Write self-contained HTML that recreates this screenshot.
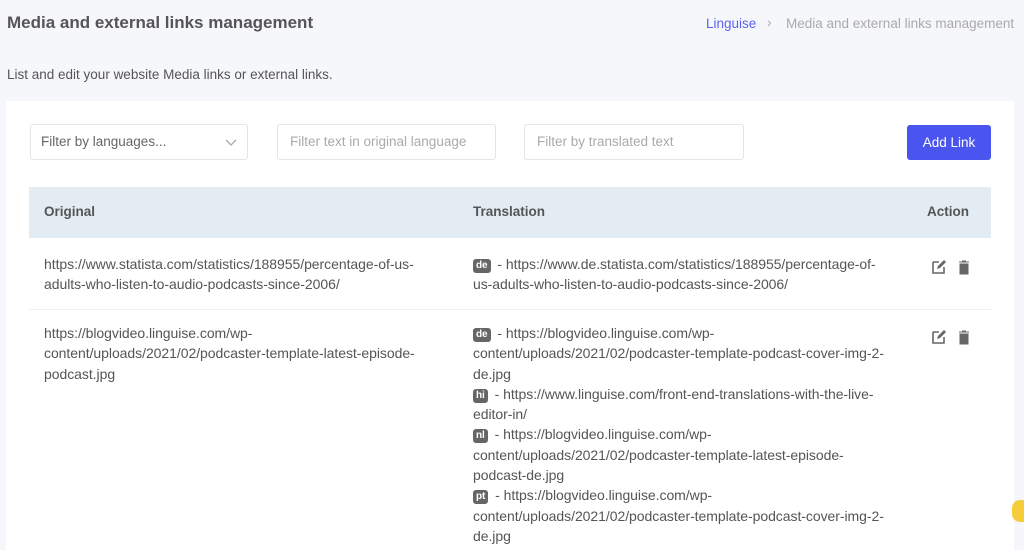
<!DOCTYPE html>
<html><head><style>
*{margin:0;padding:0;box-sizing:border-box}
html,body{width:1024px;height:550px;overflow:hidden}
body{background:#f6f7fb;font-family:"Liberation Sans",sans-serif;color:#555;position:relative}
.a{position:absolute;white-space:nowrap}
h1{position:absolute;left:7px;top:13px;font-size:17px;font-weight:bold;color:#555}
.card{position:absolute;left:6px;top:101px;width:1008px;height:449px;background:#fff}
.in{position:absolute;top:124px;height:36px;border:1px solid #e3e5ea;border-radius:3px;font-size:13.5px;color:#aaa;padding:9px 12px}
.hd{position:absolute;left:29px;top:187px;width:962px;height:51px;background:#e3ebf3}
.t{font-size:14px;line-height:20.3px;color:#555;position:absolute;white-space:nowrap;letter-spacing:-0.05px}
.b{display:inline-block;background:#666;color:#fff;font-size:10px;font-weight:bold;border-radius:3px;padding:1px 3px;line-height:12px;vertical-align:1px;margin-right:3px}
</style></head><body>
<h1>Media and external links management</h1>
<div class="a" style="left:706px;top:16px;font-size:13.5px;color:#5b62f0">Linguise</div>
<div class="a" style="left:767px;top:15px;font-size:13.5px;color:#aaa">›</div>
<div class="a" style="left:786px;top:16px;font-size:13.5px;color:#aaa">Media and external links management</div>
<div class="a" style="left:7px;top:67px;font-size:13.5px;color:#555">List and edit your website Media links or external links.</div>
<div class="card"></div>
<div class="in" style="left:30px;width:218px;color:#666;padding-left:10px">Filter by languages...<svg style="position:absolute;right:10px;top:14px" width="12" height="8"><path d="M1 1l5 5 5-5" stroke="#aaa" fill="none" stroke-width="1.3"/></svg></div>
<div class="in" style="left:277px;width:219px">Filter text in original language</div>
<div class="in" style="left:524px;width:220px">Filter by translated text</div>
<div class="a" style="left:907px;top:125px;width:84px;height:35px;background:#4a55ef;color:#fff;border-radius:3px;font-size:13.5px;text-align:center;line-height:35px">Add Link</div>
<div class="hd"></div>
<div class="a" style="left:44px;top:204px;font-size:13.5px;font-weight:bold;color:#555">Original</div>
<div class="a" style="left:473px;top:204px;font-size:13.5px;font-weight:bold;color:#555">Translation</div>
<div class="a" style="left:927px;top:204px;font-size:13.5px;font-weight:bold;color:#555">Action</div>
<div class="t" style="left:44px;top:254px">https://www.statista.com/statistics/188955/percentage-of-us-<br>adults-who-listen-to-audio-podcasts-since-2006/</div>
<div class="t" style="left:473px;top:254px"><span class="b">de</span> - https://www.de.statista.com/statistics/188955/percentage-of-<br>us-adults-who-listen-to-audio-podcasts-since-2006/</div>
<div class="a" style="left:29px;top:309px;width:962px;height:1px;background:#eceef2"></div>
<div class="t" style="left:44px;top:323px">https://blogvideo.linguise.com/wp-<br>content/uploads/2021/02/podcaster-template-latest-episode-<br>podcast.jpg</div>
<div class="t" style="left:473px;top:323px"><span class="b">de</span> - https://blogvideo.linguise.com/wp-<br>content/uploads/2021/02/podcaster-template-podcast-cover-img-2-<br>de.jpg<br><span class="b">hi</span> - https://www.linguise.com/front-end-translations-with-the-live-<br>editor-in/<br><span class="b">nl</span> - https://blogvideo.linguise.com/wp-<br>content/uploads/2021/02/podcaster-template-latest-episode-<br>podcast-de.jpg<br><span class="b">pt</span> - https://blogvideo.linguise.com/wp-<br>content/uploads/2021/02/podcaster-template-podcast-cover-img-2-<br>de.jpg</div>
<svg class="a" style="left:931px;top:259px" width="40" height="16"><path d="M2 3h6M2 3v11h11V8" stroke="#666" stroke-width="1.6" fill="none"/><path d="M6 10l1-3 6-6 2 2-6 6z" fill="#666"/><path d="M28 3h10M31 2h4M29 5h8v10h-8z" fill="#666" stroke="#666" stroke-width="1"/></svg>
<svg class="a" style="left:931px;top:329px" width="40" height="16"><path d="M2 3h6M2 3v11h11V8" stroke="#666" stroke-width="1.6" fill="none"/><path d="M6 10l1-3 6-6 2 2-6 6z" fill="#666"/><path d="M28 3h10M31 2h4M29 5h8v10h-8z" fill="#666" stroke="#666" stroke-width="1"/></svg>
<div class="a" style="left:1014px;top:101px;width:10px;height:449px;background:#f6f7fb"></div>
<div class="a" style="left:1012px;top:500px;width:14px;height:22px;background:#f5c518;border-radius:8px 0 0 8px;opacity:.85"></div>
</body></html>
